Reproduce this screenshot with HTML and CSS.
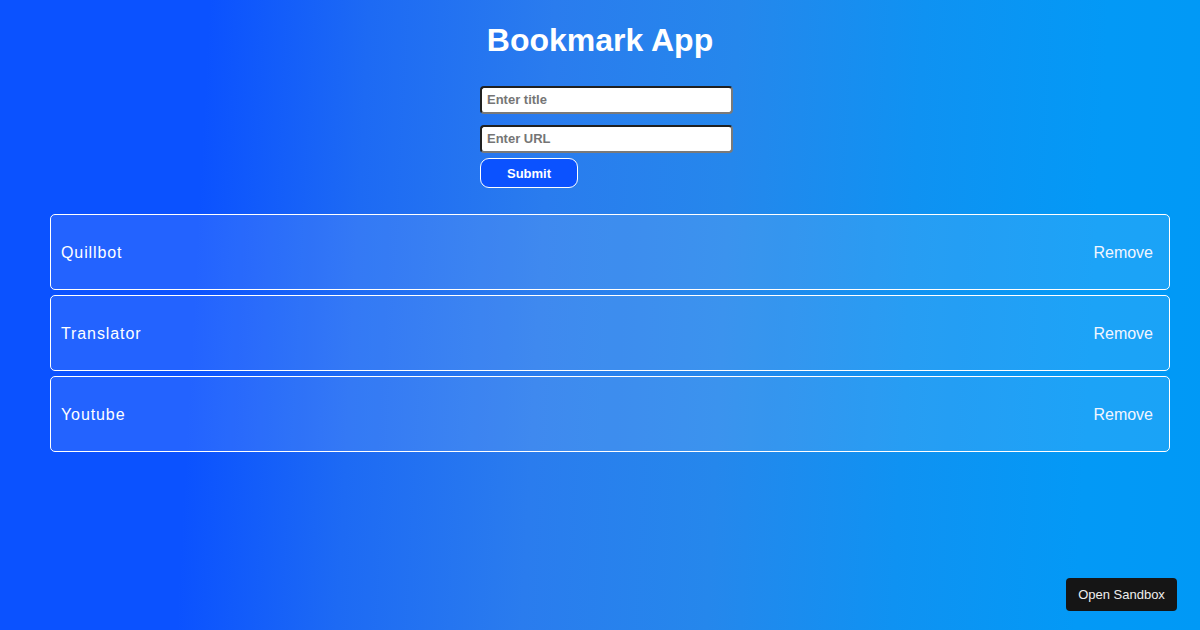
FILE: index.html
```html
<!DOCTYPE html>
<html lang="en">
<head>
<meta charset="utf-8">
<title>Bookmark App</title>
<link rel="stylesheet" href="styles.css">
</head>
<body>
<div class="app">
  <h1 class="title">Bookmark App</h1>
  <form class="form">
    <input class="field" type="text" placeholder="Enter title">
    <input class="field field-url" type="text" placeholder="Enter URL">
    <button class="submit" type="button">Submit</button>
  </form>
  <ul class="list">
    <li class="card"><span class="name">Quillbot</span><span class="remove">Remove</span></li>
    <li class="card"><span class="name">Translator</span><span class="remove">Remove</span></li>
    <li class="card"><span class="name">Youtube</span><span class="remove">Remove</span></li>
  </ul>
</div>
<button class="sandbox" type="button">Open Sandbox</button>
</body>
</html>
```
FILE: styles.css
```css
html, body {
  margin: 0;
  height: 100%;
}
body {
  font-family: "Liberation Sans", Arial, sans-serif;
  color: #fff;
  background: linear-gradient(93deg, #0b52ff 0%, #0b52ff 17%, #1d6af4 30%, #2a7cee 45%, #2587ec 60%, #0f92f2 75%, #0399f6 90%, #0099f6 100%);
  overflow: hidden;
}
.app {
  padding-top: 20px;
}
.title {
  margin: 0;
  text-align: center;
  font-size: 32px;
  font-weight: bold;
  line-height: 40px;
}
.form {
  width: 240px;
  margin: 26px auto 0;
  display: flex;
  flex-direction: column;
  align-items: flex-start;
}
.field {
  box-sizing: border-box;
  width: 253px;
  height: 28px;
  padding: 0 5px 1px;
  border: 2px solid;
  border-color: #202020 #7a7a7a #7a7a7a #202020;
  border-radius: 4px;
  background: #fff;
  font-family: "Liberation Sans", Arial, sans-serif;
  font-size: 13px;
  font-weight: bold;
  color: #333;
}
.field::placeholder {
  color: #757575;
}
.field-url {
  margin-top: 11px;
}
.submit {
  margin-top: 5px;
  box-sizing: border-box;
  width: 98px;
  height: 30px;
  border: 1px solid #fff;
  border-radius: 9px;
  background: #0b52ff;
  color: #fff;
  font-family: "Liberation Sans", Arial, sans-serif;
  font-size: 13px;
  font-weight: bold;
}
.list {
  list-style: none;
  margin: 26px 30px 0 50px;
  padding: 0;
  display: flex;
  flex-direction: column;
  gap: 5px;
}
.card {
  box-sizing: border-box;
  height: 76px;
  display: flex;
  align-items: center;
  justify-content: space-between;
  padding: 2px 16px 0 10px;
  border: 1px solid #fff;
  border-radius: 5px;
  background: rgba(255, 255, 255, 0.1);
  font-size: 16px;
}
.name {
  letter-spacing: 0.9px;
}
.remove {
  color: #f2f6ff;
}
.sandbox {
  position: fixed;
  right: 23px;
  bottom: 19px;
  width: 111px;
  height: 33px;
  border: none;
  border-radius: 4px;
  background: #151515;
  color: #eee;
  font-family: "Liberation Sans", Arial, sans-serif;
  font-size: 13px;
  padding: 0;
}
```
